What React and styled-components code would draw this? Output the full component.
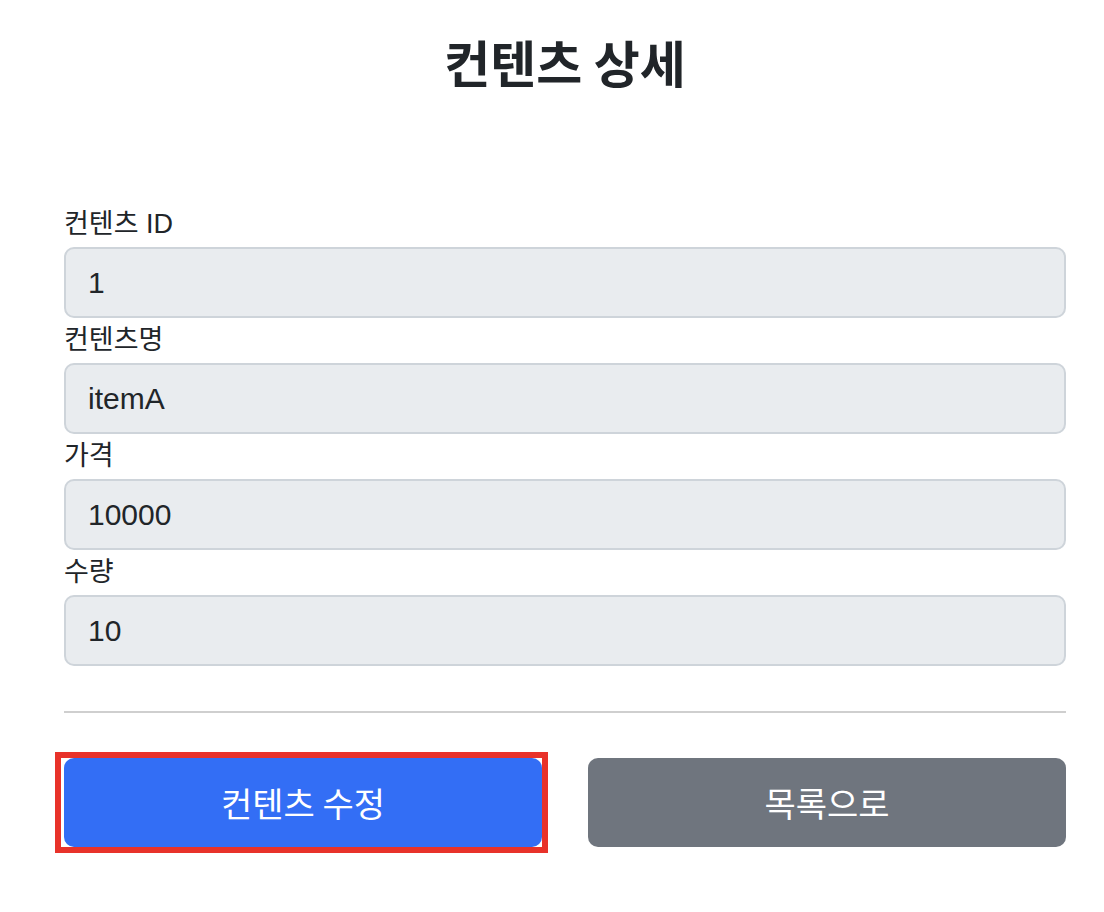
import styled, { createGlobalStyle } from "styled-components";

const GlobalStyle = createGlobalStyle`
  body {
    margin: 0;
    background: #fff;
    color: #212529;
    font-family: "Liberation Sans", "Noto Sans CJK KR", sans-serif;
  }
`;

const Container = styled.div`
  width: 1002px;
  padding: 0 38px 40px 64px;
`;

const Header = styled.div`
  padding-top: 31px;
  margin-bottom: 111px;
  text-align: center;
`;

const Title = styled.h2`
  margin: 0;
  font-family: "Noto Sans CJK KR", sans-serif;
  font-size: 50px;
  line-height: 60px;
  font-weight: 700;
  color: #212529;
`;

const Field = styled.div`
  display: flex;
  flex-direction: column;
`;

const Label = styled.label`
  display: block;
  font-size: 27px;
  line-height: 45px;
  height: 45px;
`;

const Input = styled.input`
  box-sizing: border-box;
  width: 100%;
  height: 71px;
  padding: 0 22px;
  border: 2px solid #ced4da;
  border-radius: 10px;
  background: #e9ecef;
  color: #212529;
  font-family: "Liberation Sans", "Noto Sans CJK KR", sans-serif;
  font-size: 30px;
  outline: none;
`;

const Divider = styled.hr`
  margin: 45px 0;
  border: 0;
  border-top: 2px solid #cfcfcf;
`;

const ButtonRow = styled.div`
  display: grid;
  grid-template-columns: 1fr 1fr;
  gap: 46px;
`;

const Button = styled.button`
  position: relative;
  height: 89px;
  border: 0;
  border-radius: 10px;
  background: ${(p) => (p.$variant === "primary" ? "#336ef5" : "#6f757e")};
  color: #fff;
  font-family: "Noto Sans CJK KR", sans-serif;
  font-size: 34px;
  cursor: pointer;

  ${(p) =>
    p.$highlight &&
    `
    &::after {
      content: "";
      position: absolute;
      top: -6px;
      bottom: -6px;
      left: -9px;
      right: -6px;
      border: 6px solid #e8322a;
      pointer-events: none;
    }
  `}
`;

const fields = [
  { id: "itemId", label: "컨텐츠 ID", value: "1" },
  { id: "itemName", label: "컨텐츠명", value: "itemA" },
  { id: "price", label: "가격", value: "10000" },
  { id: "quantity", label: "수량", value: "10" },
];

export default function App() {
  return (
    <>
      <GlobalStyle />
      <Container>
        <Header>
          <Title>컨텐츠 상세</Title>
        </Header>
        {fields.map((f) => (
          <Field key={f.id}>
            <Label htmlFor={f.id}>{f.label}</Label>
            <Input id={f.id} value={f.value} readOnly />
          </Field>
        ))}
        <Divider />
        <ButtonRow>
          <Button $variant="primary" $highlight>
            컨텐츠 수정
          </Button>
          <Button $variant="secondary">목록으로</Button>
        </ButtonRow>
      </Container>
    </>
  );
}
